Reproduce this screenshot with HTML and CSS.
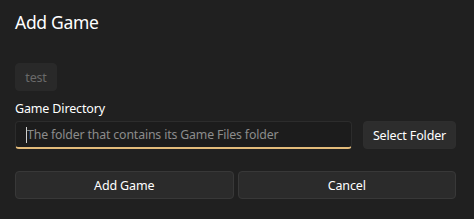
FILE: index.html
```html
<!doctype html>
<html>
<head>
	<title>Add Game</title>
	<meta charset="utf-8">
	<link rel="stylesheet" href="styles.css">
</head>
<body>
	<div class="dialog">
		<h1 class="title">Add Game</h1>

		<div class="row">
			<button class="button test" disabled>test</button>
		</div>

		<label class="label">Game Directory</label>
		<div class="field">
			<div class="input">
				<span class="caret"></span>
				<span class="placeholder">The folder that contains its Game Files folder</span>
			</div>
			<button class="button select">Select Folder</button>
		</div>

		<div class="actions">
			<button class="button wide">Add Game</button>
			<button class="button wide">Cancel</button>
		</div>
	</div>
</body>
</html>
```

FILE: styles.css
```css
* {
	box-sizing: border-box;
	color: #fff;
	font-family: "Noto Sans", sans-serif;
}
html, body {
	margin: 0;
	background: #202020;
}
.dialog {
	width: 474px;
	height: 219px;
	padding: 10px 18px 0 15px;
}
.title {
	margin: 0;
	font-size: 17.5px;
	font-weight: 400;
	letter-spacing: -0.3px;
	line-height: 24px;
}
.row {
	margin-top: 29px;
}
.button {
	display: flex;
	align-items: center;
	justify-content: center;
	height: 28px;
	padding: 0 11px;
	border: 1px solid #2e2e2e;
	border-radius: 4px;
	background: #2d2d2d;
	font-size: 12.5px;
	letter-spacing: -0.15px;
	color: #fff;
}
.button.test {
	width: 42px;
	padding: 0;
	background: #292929;
	border-color: #292929;
	color: #6a6a6a;
}
.label {
	display: block;
	margin-top: 9px;
	font-size: 12.5px;
	letter-spacing: -0.15px;
	line-height: 18px;
}
.field {
	display: flex;
	gap: 11px;
	margin-top: 3px;
}
.input {
	display: flex;
	align-items: center;
	width: 337px;
	height: 28px;
	padding: 0 10px;
	border: 1px solid #2c2c2c;
	border-bottom: 2px solid #e3bb7a;
	border-radius: 4px;
	background: #1c1c1c;
}
.caret {
	width: 1px;
	height: 16px;
	background: #cfcfcf;
}
.placeholder {
	font-size: 12.3px;
	letter-spacing: -0.15px;
	color: #8c8c8c;
	white-space: nowrap;
}
.button.select {
	width: 93px;
	padding: 0;
}
.actions {
	display: flex;
	gap: 4px;
	margin-top: 22px;
}
.button.wide {
	flex: 1;
	border-color: #383838;
	background: #2b2b2b;
}
```
